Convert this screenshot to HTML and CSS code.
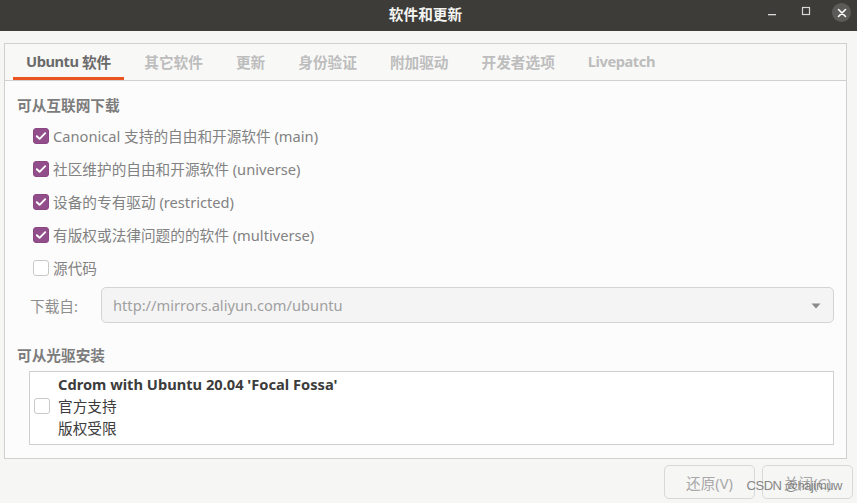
FILE: index.html
```html
<!DOCTYPE html>
<html lang="zh-CN">
<head>
<meta charset="utf-8">
<title>软件和更新</title>
<link rel="stylesheet" href="styles.css">
</head>
<body>
<div class="window">
  <header class="titlebar">
    <div class="title">软件和更新</div>
    <div class="controls">
      <span class="ctl ctl-min"><svg width="10" height="10" viewBox="0 0 10 10"><rect x="1" y="6" width="8" height="1.3" fill="#d8d8d6"/></svg></span>
      <span class="ctl ctl-max"><svg width="10" height="10" viewBox="0 0 10 10"><rect x="1.5" y="1.5" width="7" height="7" fill="none" stroke="#d8d8d6" stroke-width="1.2"/></svg></span>
      <span class="ctl ctl-close"><svg width="10" height="10" viewBox="0 0 10 10"><path d="M1.5 1.5 L8.5 8.5 M8.5 1.5 L1.5 8.5" stroke="#ffffff" stroke-width="1.6" stroke-linecap="round"/></svg></span>
    </div>
  </header>

  <main class="main">
    <section class="frame">
      <nav class="tabs">
        <span class="tab active"><span class="latin">Ubuntu </span>软件</span>
        <span class="tab">其它软件</span>
        <span class="tab">更新</span>
        <span class="tab">身份验证</span>
        <span class="tab">附加驱动</span>
        <span class="tab">开发者选项</span>
        <span class="tab"><span class="latin">Livepatch</span></span>
      </nav>
      <div class="content">
        <div class="section-title">可从互联网下载</div>
        <ul class="checks">
          <li class="row"><span class="cb on"><svg width="12" height="10" viewBox="0 0 12 10"><path d="M1.8 5.2 L4.6 7.8 L10.2 2.2" fill="none" stroke="#fff" stroke-width="1.9" stroke-linecap="round" stroke-linejoin="round"/></svg></span><span class="label">Canonical 支持的自由和开源软件 (main)</span></li>
          <li class="row"><span class="cb on"><svg width="12" height="10" viewBox="0 0 12 10"><path d="M1.8 5.2 L4.6 7.8 L10.2 2.2" fill="none" stroke="#fff" stroke-width="1.9" stroke-linecap="round" stroke-linejoin="round"/></svg></span><span class="label">社区维护的自由和开源软件 (universe)</span></li>
          <li class="row"><span class="cb on"><svg width="12" height="10" viewBox="0 0 12 10"><path d="M1.8 5.2 L4.6 7.8 L10.2 2.2" fill="none" stroke="#fff" stroke-width="1.9" stroke-linecap="round" stroke-linejoin="round"/></svg></span><span class="label">设备的专有驱动 (restricted)</span></li>
          <li class="row"><span class="cb on"><svg width="12" height="10" viewBox="0 0 12 10"><path d="M1.8 5.2 L4.6 7.8 L10.2 2.2" fill="none" stroke="#fff" stroke-width="1.9" stroke-linecap="round" stroke-linejoin="round"/></svg></span><span class="label">有版权或法律问题的的软件 (multiverse)</span></li>
          <li class="row"><span class="cb"></span><span class="label">源代码</span></li>
        </ul>
        <div class="source-row">
          <span class="source-label">下载自:</span>
          <div class="combo">
            <span class="combo-text">http://mirrors.aliyun.com/ubuntu</span>
            <svg class="combo-arrow" width="10" height="6" viewBox="0 0 10 6"><path d="M0.5 0.5 L9.5 0.5 L5 5.5 Z" fill="#8a8a8a"/></svg>
          </div>
        </div>
        <div class="section-title second">可从光驱安装</div>
        <div class="listbox">
          <div class="cd-row">
            <span class="cb"></span>
            <div class="cd-text">
              <div class="cd-name">Cdrom with Ubuntu 20.04 'Focal Fossa'</div>
              <div class="cd-line">官方支持</div>
              <div class="cd-line">版权受限</div>
            </div>
          </div>
        </div>
      </div>
    </section>
    <footer class="buttons">
      <button class="btn">还原(V)</button>
      <button class="btn">关闭(C)</button>
      <span class="watermark">CSDN @hajimuw</span>
    </footer>
  </main>
</div>
</body>
</html>
```

FILE: styles.css
```css
* { box-sizing: border-box; }
html, body { margin: 0; padding: 0; }
body {
  width: 857px;
  height: 503px;
  overflow: hidden;
  background: #f6f6f5;
  font-family: "Noto Sans", "Noto Sans CJK SC", sans-serif;
  font-size: 14.67px;
}
.window { width: 857px; height: 503px; display: flex; flex-direction: column; }

.titlebar {
  height: 31px;
  background: #3d3c38;
  position: relative;
  display: flex;
  align-items: center;
  justify-content: center;
}
.title {
  color: #f4f4f2;
  font-weight: bold;
  font-size: 14.67px;
  line-height: 20px;
  margin-top: -3px;
  margin-right: 6px;
}
.controls {
  position: absolute;
  right: 6px;
  top: 3px;
  display: flex;
  align-items: center;
  height: 19px;
}
.ctl { display: flex; align-items: center; justify-content: center; }
.ctl-min { width: 10px; height: 10px; margin-right: 24px; }
.ctl-max { width: 10px; height: 10px; margin-right: 21px; margin-top: -4px; }
.ctl-close {
  width: 19px; height: 19px; border-radius: 50%;
  background: #5c5b57;
}

.main { flex: 1; display: flex; flex-direction: column; padding: 12px 10px 0 4px; position: relative; }

.frame {
  height: 416px;
  border: 1px solid #d2d0ce;
  background: #fcfcfc;
  display: flex;
  flex-direction: column;
}
.tabs {
  height: 37px;
  background: #f8f8f7;
  border-bottom: 1px solid #d2d0ce;
  display: flex;
  align-items: stretch;
  padding-left: 8px;
  gap: 7px;
}
.tab {
  display: flex;
  align-items: center;
  padding: 0 13px;
  padding-top: 1px;
  font-weight: bold;
  color: #bdbdbd;
  border-bottom: 3px solid transparent;
  white-space: nowrap;
}
.tab .latin { letter-spacing: -0.45px; white-space: pre; }
.tab.active { color: #6a6a6a; border-bottom-color: #e95420; }

.content { flex: 1; padding: 14px 12px 12px 12px; display: flex; flex-direction: column; }
.section-title {
  font-weight: bold;
  color: #7c7c7c;
  line-height: 20px;
  height: 20px;
}
.section-title.second { margin-top: 22px; }

.checks { list-style: none; margin: 4px 0 1px 0; padding: 0 0 0 16px; }
.row { height: 33px; display: flex; align-items: center; }
.cb {
  width: 16px; height: 16px;
  border: 1px solid #c9c9c9;
  border-radius: 3px;
  background: #ffffff;
  display: flex; align-items: center; justify-content: center;
  flex: none;
}
.cb.on { background: #924d8b; border-color: #8a4784; }
.label { margin-left: 4px; color: #828282; white-space: nowrap; }

.source-row { display: flex; align-items: center; margin-top: 2px; height: 36px; padding-left: 13px; }
.source-label { width: 71px; color: #8e8e8e; }
.combo {
  flex: 1;
  height: 36px;
  border: 1px solid #d4d4d4;
  border-radius: 5px;
  background: #f4f4f4;
  display: flex;
  align-items: center;
  justify-content: space-between;
  padding: 0 12px 0 11px;
}
.combo-text { color: #a0a0a0; }
.combo-arrow { display: block; margin-top: 1px; }

.listbox {
  margin: 6px 0 0 12px;
  height: 74px;
  border: 1px solid #d2d0ce;
  background: #ffffff;
  padding: 1px 0 0 4px;
}
.cd-row { display: flex; align-items: center; height: 66px; }
.cd-text { margin-left: 8px; }
.cd-name, .cd-line { line-height: 22px; height: 22px; color: #3c3c3c; white-space: nowrap; }
.cd-name { font-weight: bold; }

.buttons { display: flex; justify-content: flex-end; gap: 7px; margin: 6px -6px 0 0; position: relative; }
.btn {
  width: 91px; height: 34px;
  border: 1px solid #d8d8d8;
  border-radius: 5px;
  background: #f6f6f5;
  font-family: "Noto Sans", "Noto Sans CJK SC", sans-serif;
  font-size: 14.67px;
  color: #a8a8a8;
  padding: 0;
}
.watermark {
  position: absolute;
  right: 11px;
  top: 13px;
  font-family: "Liberation Sans", sans-serif;
  font-size: 13px;
  letter-spacing: -0.45px;
  color: #7a7a7a;
  opacity: 0.9;
}
```
